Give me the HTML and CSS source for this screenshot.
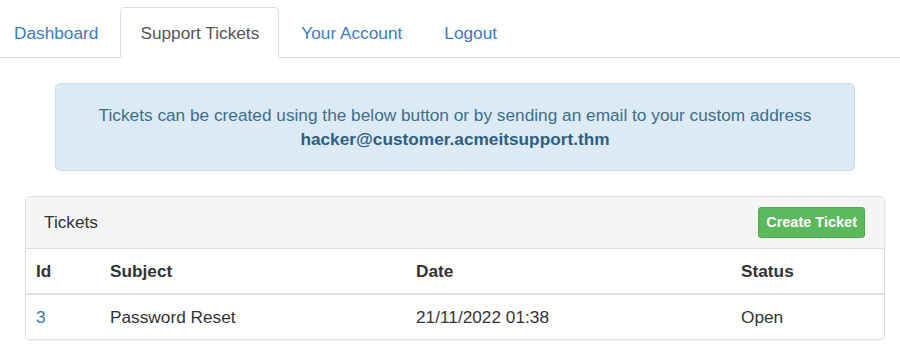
FILE: index.html
```html
<!DOCTYPE html>
<html>
<head>
<meta charset="utf-8">
<link rel="stylesheet" href="styles.css">
</head>
<body>
<ul class="tabs">
  <li><a href="#" class="tab">Dashboard</a></li>
  <li><a href="#" class="tab active">Support Tickets</a></li>
  <li><a href="#" class="tab">Your Account</a></li>
  <li><a href="#" class="tab">Logout</a></li>
</ul>
<div class="container">
  <div class="alert">
    Tickets can be created using the below button or by sending an email to your custom address<br>
    <strong>hacker@customer.acmeitsupport.thm</strong>
  </div>
  <div class="panel">
    <div class="panel-heading">
      <span class="panel-title">Tickets</span>
      <a href="#" class="btn">Create Ticket</a>
    </div>
    <table class="table">
      <colgroup>
        <col class="c1"><col class="c2"><col class="c3"><col class="c4">
      </colgroup>
      <thead>
        <tr><th>Id</th><th>Subject</th><th>Date</th><th>Status</th></tr>
      </thead>
      <tbody>
        <tr><td><a href="#" class="link">3</a></td><td>Password Reset</td><td>21/11/2022 01:38</td><td>Open</td></tr>
      </tbody>
    </table>
  </div>
</div>
</body>
</html>
```
FILE: styles.css
```css
* { box-sizing: border-box; }
html, body { margin: 0; padding: 0; background: #fff; }
body {
  font-family: "Liberation Sans", Arial, sans-serif;
  font-size: 17.25px;
  line-height: 24px;
  color: #333;
  width: 900px;
  height: 364px;
  overflow: hidden;
}
.tabs {
  list-style: none;
  margin: 0;
  padding: 7px 0 0 0;
  display: flex;
  border-bottom: 1px solid #ddd;
}
.tabs li { margin-bottom: -1px; }
.tabs li:first-child { margin-left: -6px; }
.tab {
  display: block;
  padding: 13px 19px 12px 19px;
  margin-right: 2px;
  border: 1px solid transparent;
  border-radius: 5px 5px 0 0;
  color: #3b7cbb;
  text-decoration: none;
}
.tab.active {
  color: #555;
  background: #fff;
  border-color: #ddd;
  border-bottom-color: #fff;
}
.container {
  padding: 25px 15px 0 25px;
}
.alert {
  margin: 0 30px 25px 30px;
  padding: 19px 20px;
  background: #dceaf6;
  border: 1px solid #c3ddef;
  border-radius: 5px;
  color: #3c6e8f;
  text-align: center;
}
.alert strong { font-weight: bold; color: #2f5f80; }
.panel {
  border: 1px solid #ddd;
  border-radius: 5px;
  overflow: hidden;
  box-shadow: 0 1px 1px rgba(0,0,0,0.05);
}
.panel-heading {
  display: flex;
  justify-content: space-between;
  align-items: center;
  padding: 10px 19px 10px 18px;
  background: #f5f5f5;
  border-bottom: 1px solid #ddd;
}
.panel-title { color: #333; margin-top: -2px; }
.btn {
  display: block;
  padding: 3px 7px;
  font-size: 14.5px;
  line-height: 23px;
  font-weight: bold;
  color: #fff;
  background: #5cb85c;
  border: 1px solid #4cae4c;
  border-radius: 3px;
  text-decoration: none;
}
.table {
  width: 100%;
  border-collapse: collapse;
}
.c1 { width: 74px; }
.c2 { width: 306px; }
.c3 { width: 325px; }
.table th, .table td {
  text-align: left;
  padding: 10px;
  line-height: 24px;
}
.table th {
  font-weight: bold;
  border-bottom: 2px solid #ddd;
}
.link { color: #337ab7; text-decoration: none; }
```
